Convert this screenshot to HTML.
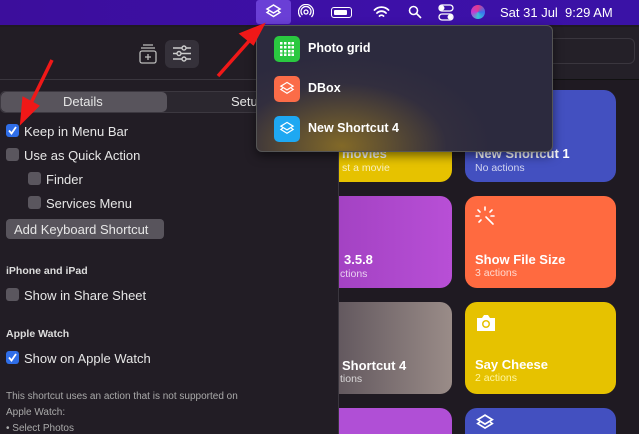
<!DOCTYPE html><html style="overflow:hidden;width:639px;height:434px"><head><style>
*{margin:0;padding:0;box-sizing:border-box}
body{width:639px;height:434px;overflow:hidden;background:#1f1a22;font-family:"Liberation Sans",sans-serif;position:relative;color:#ddd}
.a{position:absolute}
.menubar{left:0;top:0;width:639px;height:25px;background:linear-gradient(90deg,#3c0e9c,#3d10a8 60%,#3a12a6)}
.mb{color:#fff;font-size:13px;top:5px}
.left{left:0;top:27px;width:339px;height:407px;background:#221d25;border-right:1px solid #3a363e;z-index:2}
.txt{font-size:13px;color:#e6e6e6}
.cb{width:13px;height:13px;border-radius:3px;background:#5a565e}
.cbc{background:#2f6ee8}
.hd{font-size:10.5px;font-weight:bold;color:#ddd}
.card{border-radius:12px}
.ct{font-size:13px;font-weight:bold;color:#fff}
.cs{font-size:10.5px;color:rgba(255,255,255,.75)}
.drop{left:256px;top:25px;width:297px;height:127px;border-radius:6px;background:radial-gradient(ellipse 150px 90px at 85px 120px,rgba(130,105,40,1),rgba(50,46,62,1) 70%,#2c2a3e);border:1px solid #555;box-shadow:0 4px 10px rgba(0,0,0,.5);z-index:5}
.ic{width:26px;height:26px;border-radius:5px}
.dt{font-size:12.5px;font-weight:bold;color:#fff}
.z{z-index:3}.zd{z-index:6}
</style></head><body>
<div class="a menubar"></div>
<div class="a" style="left:256px;top:0;width:35px;height:24px;background:#6a3fd6;border-radius:3px"></div>
<svg class="a" style="left:265px;top:4px" width="17" height="16" viewBox="0 0 17 16" fill="none" stroke="#fff" stroke-width="1.5"><path d="M8.5 1L15 5 8.5 9 2 5Z"/><path d="M4 7L2 8.5 8.5 12.5 15 8.5 13 7"/></svg>
<svg class="a" style="left:298px;top:4px" width="16" height="16" viewBox="0 0 16 16" fill="none" stroke="#fff" stroke-width="1.3"><circle cx="8" cy="8" r="2"/><path d="M4.5 11a5 5 0 1 1 7 0M2.5 13a7.5 7.5 0 1 1 11 0"/></svg>
<div class="a" style="left:331px;top:7px;width:21px;height:11px;border:1.3px solid #fff;border-radius:3px"><div style="margin:1.5px;width:13px;height:5px;background:#fff;border-radius:1px"></div></div>
<svg class="a" style="left:373px;top:5px" width="17" height="14" viewBox="0 0 17 14" fill="none" stroke="#fff" stroke-width="1.8" stroke-linecap="round"><path d="M1.5 5a10 10 0 0 1 14 0M4 8a6.5 6.5 0 0 1 9 0M6.5 11a3 3 0 0 1 4 0"/></svg>
<svg class="a" style="left:408px;top:5px" width="14" height="14" viewBox="0 0 14 14" fill="none" stroke="#fff" stroke-width="1.6"><circle cx="5.5" cy="5.5" r="4"/><path d="M8.5 8.5L13 13"/></svg>
<svg class="a" style="left:438px;top:4px" width="16" height="17" viewBox="0 0 16 17" fill="none" stroke="#fff" stroke-width="1.3"><rect x="1" y="1" width="14" height="6" rx="3"/><rect x="1" y="10" width="14" height="6" rx="3"/><circle cx="4" cy="4" r="1.8" fill="#fff"/><circle cx="12" cy="13" r="1.8" fill="#fff"/></svg>
<div class="a" style="left:471px;top:5px;width:14px;height:14px;border-radius:50%;background:conic-gradient(#e23a8c,#3b6ef0,#36c6d6,#c43ad0,#e23a8c)"></div>
<div class="a mb" style="left:500px">Sat 31 Jul&nbsp; 9:29 AM</div>

<div class="a left"></div>
<div class="a z" style="left:0;top:79px;width:338px;height:1px;background:#3a363e"></div>
<svg class="a z" style="left:138px;top:43px" width="20" height="22" viewBox="0 0 20 22" fill="none" stroke="#bbb" stroke-width="1.3"><path d="M5 2h10M3 5h14"/><rect x="2" y="8" width="16" height="12" rx="2"/><path d="M10 11v6M7 14h6"/></svg>
<div class="a z" style="left:165px;top:40px;width:34px;height:28px;background:#35313a;border-radius:6px"></div>
<svg class="a z" style="left:172px;top:45px" width="20" height="17" viewBox="0 0 20 17" fill="none" stroke="#ccc" stroke-width="1.4"><path d="M1 3h18M1 8.5h18M1 14h18"/><circle cx="12" cy="3" r="2" fill="#35313a"/><circle cx="7" cy="8.5" r="2" fill="#35313a"/><circle cx="12" cy="14" r="2" fill="#35313a"/></svg>
<div class="a z" style="left:0;top:91px;width:338px;height:22px;background:#2b272f;border:1px solid #3c3840;border-radius:5px"></div>
<div class="a z" style="left:1px;top:92px;width:166px;height:20px;background:#58545c;border-radius:5px"></div>
<div class="a txt z" style="left:63px;top:94px">Details</div>
<div class="a txt z" style="left:231px;top:94px">Setu</div>

<div class="a cb cbc z" style="left:6px;top:124px"></div><svg class="a z" style="left:6px;top:124px" width="13" height="13"><path d="M3 6.5l2.5 3L10 3" stroke="#fff" stroke-width="1.8" fill="none"/></svg>
<div class="a txt z" style="left:24px;top:124px">Keep in Menu Bar</div>
<div class="a cb z" style="left:6px;top:148px"></div><div class="a txt z" style="left:24px;top:148px">Use as Quick Action</div>
<div class="a cb z" style="left:28px;top:172px"></div><div class="a txt z" style="left:46px;top:172px">Finder</div>
<div class="a cb z" style="left:28px;top:196px"></div><div class="a txt z" style="left:46px;top:196px">Services Menu</div>
<div class="a z" style="left:6px;top:219px;width:158px;height:20px;background:#58545c;border-radius:4px"></div>
<div class="a txt z" style="left:14px;top:222px">Add Keyboard Shortcut</div>
<div class="a hd z" style="left:6px;top:265px">iPhone and iPad</div>
<div class="a cb z" style="left:6px;top:288px"></div><div class="a txt z" style="left:24px;top:288px">Show in Share Sheet</div>
<div class="a hd z" style="left:6px;top:328px">Apple Watch</div>
<div class="a cb cbc z" style="left:6px;top:351px"></div><svg class="a z" style="left:6px;top:351px" width="13" height="13"><path d="M3 6.5l2.5 3L10 3" stroke="#fff" stroke-width="1.8" fill="none"/></svg>
<div class="a txt z" style="left:24px;top:351px">Show on Apple Watch</div>
<div class="a z" style="left:6px;top:389px;font-size:10px;color:#aaa;line-height:16px">This shortcut uses an action that is not supported on<br>Apple Watch:<br>• Select Photos</div>

<div class="a" style="left:339px;top:27px;width:300px;height:52px;background:#242028"></div>
<div class="a" style="left:540px;top:38px;width:95px;height:26px;border:1px solid #3a363e;border-radius:6px"></div>
<div class="a" style="left:339px;top:79px;width:300px;height:1px;background:#111"></div>

<div class="a card" style="left:320px;top:90px;width:132px;height:92px;background:#e6c200"></div>
<div class="a ct" style="left:342px;top:146px">movies</div><div class="a cs" style="left:342px;top:162px">st a movie</div>
<div class="a card" style="left:465px;top:90px;width:151px;height:92px;background:#4350c0"></div>
<div class="a ct" style="left:475px;top:146px">New Shortcut 1</div><div class="a cs" style="left:475px;top:162px">No actions</div>
<div class="a card" style="left:320px;top:196px;width:132px;height:92px;background:linear-gradient(90deg,#a040c0,#b84fd6)"></div>
<div class="a ct" style="left:344px;top:252px">3.5.8</div><div class="a cs" style="left:340px;top:268px">ctions</div>
<div class="a card" style="left:465px;top:196px;width:151px;height:92px;background:#ff6a40"></div>
<svg class="a" style="left:474px;top:205px" width="22" height="22" viewBox="0 0 22 22" stroke="#fff" stroke-width="1.6" stroke-linecap="round"><path d="M11 2v3M4 5l2 2M2 11h3M18 5l-2 2M17 11h3M5 17l2-2M12 12l7 7"/></svg>
<div class="a ct" style="left:475px;top:252px">Show File Size</div><div class="a cs" style="left:475px;top:267px">3 actions</div>
<div class="a card" style="left:320px;top:302px;width:132px;height:92px;background:linear-gradient(90deg,#5a5058,#9a8c88)"></div>
<div class="a ct" style="left:342px;top:358px">Shortcut 4</div><div class="a cs" style="left:340px;top:373px">tions</div>
<div class="a card" style="left:465px;top:302px;width:151px;height:92px;background:#e6c200"></div>
<svg class="a" style="left:475px;top:314px" width="22" height="18" viewBox="0 0 22 18"><path d="M2 4h5l2-3h4l2 3h5v13H2Z" fill="#fff"/><circle cx="11" cy="10" r="4" fill="#e6c200"/><circle cx="11" cy="10" r="2.5" fill="#fff"/></svg>
<div class="a ct" style="left:475px;top:357px">Say Cheese</div><div class="a cs" style="left:475px;top:372px;color:#fff6a0">2 actions</div>
<div class="a" style="left:320px;top:408px;width:132px;height:26px;background:#b04fd6;border-radius:12px 12px 0 0"></div>
<div class="a" style="left:465px;top:408px;width:151px;height:26px;background:#4350c0;border-radius:12px 12px 0 0"></div>
<svg class="a" style="left:475px;top:414px" width="20" height="18" viewBox="0 0 17 16" fill="none" stroke="#fff" stroke-width="1.5"><path d="M8.5 1L15 5 8.5 9 2 5Z"/><path d="M4 7L2 8.5 8.5 12.5 15 8.5 13 7"/></svg>

<div class="a drop"></div>
<div class="a ic zd" style="left:274px;top:36px;background:#2ac840"></div>
<svg class="a zd" style="left:280px;top:42px" width="14" height="14"><g fill="#fff"><rect x="0" y="0" width="2.5" height="2.5"/><rect x="4" y="0" width="2.5" height="2.5"/><rect x="8" y="0" width="2.5" height="2.5"/><rect x="11.5" y="0" width="2.5" height="2.5"/><rect x="0" y="4" width="2.5" height="2.5"/><rect x="4" y="4" width="2.5" height="2.5"/><rect x="8" y="4" width="2.5" height="2.5"/><rect x="11.5" y="4" width="2.5" height="2.5"/><rect x="0" y="8" width="2.5" height="2.5"/><rect x="4" y="8" width="2.5" height="2.5"/><rect x="8" y="8" width="2.5" height="2.5"/><rect x="11.5" y="8" width="2.5" height="2.5"/><rect x="0" y="11.5" width="2.5" height="2.5"/><rect x="4" y="11.5" width="2.5" height="2.5"/><rect x="8" y="11.5" width="2.5" height="2.5"/><rect x="11.5" y="11.5" width="2.5" height="2.5"/></g></svg>
<div class="a dt zd" style="left:308px;top:41px">Photo grid</div>
<div class="a ic zd" style="left:274px;top:76px;background:#fb6c48"></div>
<svg class="a zd" style="left:279px;top:81px" width="16" height="16" viewBox="0 0 17 16" fill="none" stroke="#fff" stroke-width="1.3"><path d="M8.5 1L15 5 8.5 9 2 5Z"/><path d="M4 7L2 8.5 8.5 12.5 15 8.5 13 7"/></svg>
<div class="a dt zd" style="left:308px;top:81px">DBox</div>
<div class="a ic zd" style="left:274px;top:116px;background:#1ea8f2"></div>
<svg class="a zd" style="left:279px;top:121px" width="16" height="16" viewBox="0 0 17 16" fill="none" stroke="#fff" stroke-width="1.3"><path d="M8.5 1L15 5 8.5 9 2 5Z"/><path d="M4 7L2 8.5 8.5 12.5 15 8.5 13 7"/></svg>
<div class="a dt zd" style="left:308px;top:121px">New Shortcut 4</div>

<svg class="a" style="left:0;top:0;z-index:9" width="639" height="434"><g stroke="#f01818" stroke-width="3.5" fill="#f01818"><path d="M218 76L250 40" fill="none"/><path d="M262 26l-20 8 11 9Z"/><path d="M52 60L30 105" fill="none"/><path d="M22 121l2-22 13 7Z"/></g></svg>
</body></html>
